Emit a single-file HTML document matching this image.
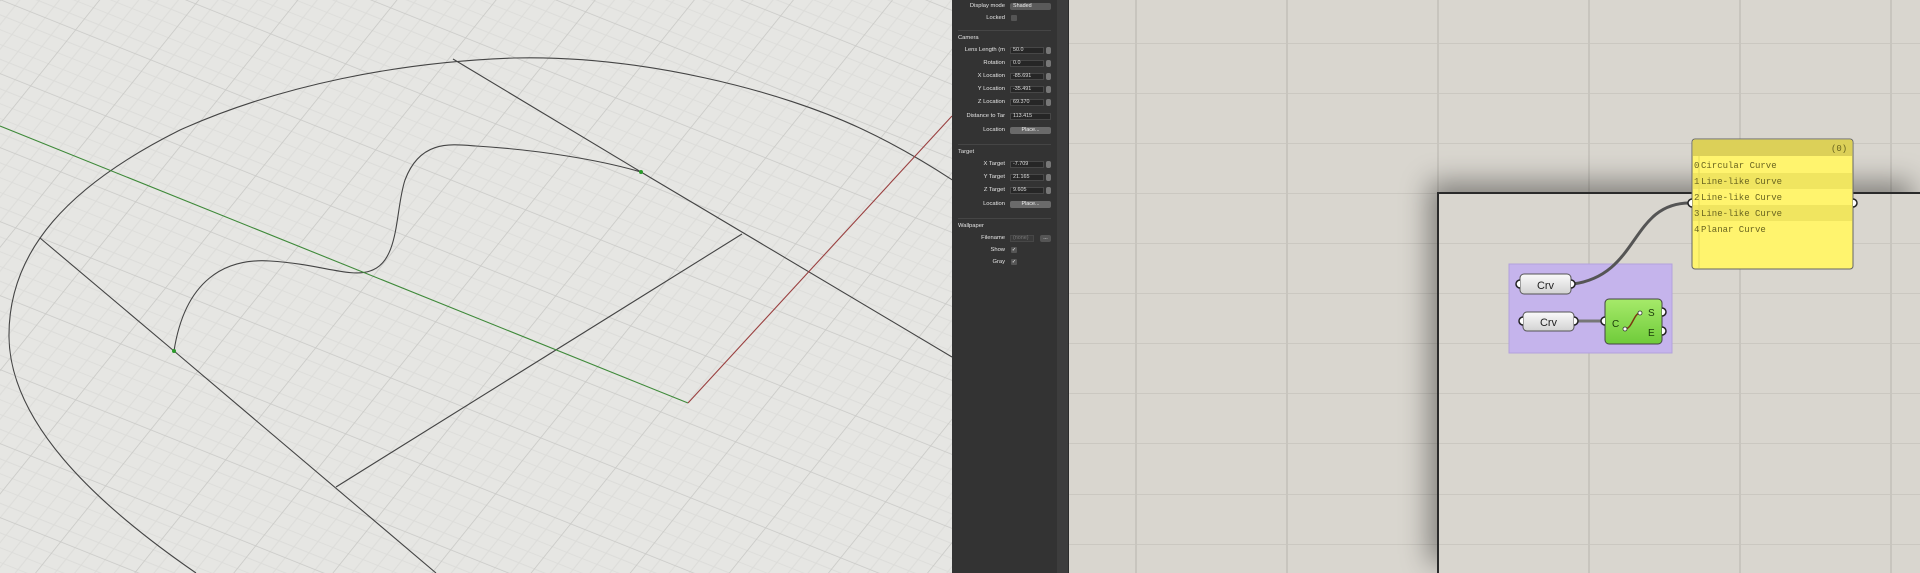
<!DOCTYPE html>
<html><head><meta charset="utf-8"><style>
*{margin:0;padding:0;box-sizing:border-box}
html,body{width:1920px;height:573px;overflow:hidden}
body{position:relative;background:#e6e6e3;font-family:"Liberation Sans",sans-serif}
#vp{position:absolute;left:0;top:0;width:952px;height:573px}
#panel{position:absolute;left:952px;top:0;width:105px;height:573px;background:#333;color:#e4e4e4;font-size:5.8px}
#strip{position:absolute;left:1057px;top:0;width:12px;height:573px;background:#3d3d3d;border-right:1px solid #2c2c2c}
#canvas{position:absolute;left:1069px;top:0;width:851px;height:573px;background:#d9d6cf;overflow:hidden}
.lab{position:absolute;right:52px;text-align:right;white-space:nowrap;line-height:7px}
.hd{position:absolute;left:6px;line-height:7px}
.fld{position:absolute;left:58px;width:34px;height:7px;background:#262626;border:1px solid #474747;line-height:5px;padding-left:2px;font-size:5.4px;color:#ddd}
.spin{position:absolute;left:94px;width:5px;height:7px;background:#777;border-radius:2px}
.btn{position:absolute;left:58px;width:41px;height:7px;background:#6a6a6a;border-radius:2px;text-align:center;line-height:7px;font-size:5.4px;color:#eee}
.sep{position:absolute;left:6px;width:93px;height:1px;background:#454545}
.cb{position:absolute;left:59px;width:6px;height:6px;background:#555;border-radius:1px;font-size:5px;line-height:6px;text-align:center;color:#fff}
.hl{position:absolute;left:0;width:851px;height:1px;background:#cbc8c1}
.vl{position:absolute;top:0;width:2px;height:573px;background:#c8c5be}
</style></head><body>
<svg id="vp" width="952" height="573" viewBox="0 0 952 573">
<defs>
<pattern id="g" width="100" height="100" patternUnits="userSpaceOnUse" patternTransform="matrix(0.75 0.30 0.45 -0.56 0 0)">
<path d="M20 0V100M40 0V100M60 0V100M80 0V100M0 20H100M0 40H100M0 60H100M0 80H100" stroke="#dcdcd9" stroke-width="1.3" fill="none"/>
<path d="M0 0V100M0 0H100" stroke="#c8c8c5" stroke-width="2" fill="none"/>
</pattern>
</defs>
<rect width="952" height="573" fill="#e6e6e3"/>
<rect width="952" height="573" fill="url(#g)"/>
<g fill="none" stroke="#444" stroke-width="1.1">
<path d="M196,573 C90,500 10,420 9,337 C8,250 70,185 180,130 C280,85 400,62 514,58 C640,55 780,90 864,130 C900,147 930,165 960,185"/>
<path d="M453,59 L641,172 L952,357"/>
<path d="M40,238 L174,351 L436,573"/>
<path d="M742,234 L336,487"/>
<path d="M174,351 C185,280 225,258 270,261 C320,264 350,278 370,271 C400,262 395,210 405,180 C420,140 450,144 476,146 C540,150 600,160 641,172"/>
</g>
<path d="M0,126 L688,403" stroke="#3f8a3a" stroke-width="1.1"/>
<path d="M688,403 L952,116" stroke="#9a4040" stroke-width="1.1"/>
<circle cx="174" cy="351" r="2" fill="#2a9a2a"/><circle cx="641" cy="172" r="2" fill="#2a9a2a"/>
</svg>
<div id="panel">
<div class="lab" style="top:3px">Display mode</div><div class="btn" style="top:3px;background:#5a5a5a;text-align:left;padding-left:3px">Shaded</div>
<div class="lab" style="top:15px">Locked</div><div class="cb" style="top:15px"></div>
<div class="sep" style="top:30px"></div>
<div class="hd" style="top:35px">Camera</div>
<div class="lab" style="top:47px">Lens Length (m</div><div class="fld" style="top:47px">50.0</div><div class="spin" style="top:47px"></div>
<div class="lab" style="top:60px">Rotation</div><div class="fld" style="top:60px">0.0</div><div class="spin" style="top:60px"></div>
<div class="lab" style="top:73px">X Location</div><div class="fld" style="top:73px">-85.691</div><div class="spin" style="top:73px"></div>
<div class="lab" style="top:86px">Y Location</div><div class="fld" style="top:86px">-35.491</div><div class="spin" style="top:86px"></div>
<div class="lab" style="top:99px">Z Location</div><div class="fld" style="top:99px">69.370</div><div class="spin" style="top:99px"></div>
<div class="lab" style="top:113px">Distance to Tar</div><div class="fld" style="top:113px;width:41px">113.415</div>
<div class="lab" style="top:127px">Location</div><div class="btn" style="top:127px">Place...</div>
<div class="sep" style="top:144px"></div>
<div class="hd" style="top:149px">Target</div>
<div class="lab" style="top:161px">X Target</div><div class="fld" style="top:161px">-7.709</div><div class="spin" style="top:161px"></div>
<div class="lab" style="top:174px">Y Target</div><div class="fld" style="top:174px">21.165</div><div class="spin" style="top:174px"></div>
<div class="lab" style="top:187px">Z Target</div><div class="fld" style="top:187px">9.605</div><div class="spin" style="top:187px"></div>
<div class="lab" style="top:201px">Location</div><div class="btn" style="top:201px">Place...</div>
<div class="sep" style="top:218px"></div>
<div class="hd" style="top:223px">Wallpaper</div>
<div class="lab" style="top:235px">Filename</div><div class="fld" style="top:235px;width:24px;background:#3a3a3a;color:#777">(none)</div><div class="btn" style="top:235px;left:88px;width:11px;background:#555">...</div>
<div class="lab" style="top:247px">Show</div><div class="cb" style="top:247px">✓</div>
<div class="lab" style="top:259px">Gray</div><div class="cb" style="top:259px">✓</div>
</div>
<div id="strip"></div>
<div id="canvas">
<div class="hl" style="top:43px"></div><div class="hl" style="top:93px"></div><div class="hl" style="top:143px"></div><div class="hl" style="top:193px"></div><div class="hl" style="top:243px"></div><div class="hl" style="top:293px"></div><div class="hl" style="top:343px"></div><div class="hl" style="top:393px"></div><div class="hl" style="top:443px"></div><div class="hl" style="top:494px"></div><div class="hl" style="top:544px"></div>
<div class="vl" style="left:66px"></div><div class="vl" style="left:217px"></div><div class="vl" style="left:368px"></div><div class="vl" style="left:519px"></div><div class="vl" style="left:670px"></div><div class="vl" style="left:821px"></div>
<div style="position:absolute;left:368px;top:192px;width:483px;height:381px;border-top:2px solid #2a2a2a;border-left:2px solid #2a2a2a;box-shadow:-8px -10px 26px rgba(0,0,0,0.4)"></div>
</div>
<svg style="position:absolute;left:0;top:0" width="1920" height="573">
<rect x="1509" y="264" width="163" height="89" fill="#c5b4ec" stroke="#b3a2dc"/>
<path d="M1573,284 C1640,275 1630,203 1690,203" stroke="#555" stroke-width="3" fill="none"/>
<path d="M1575,321 L1603,321" stroke="#777" stroke-width="3"/>
<defs><linearGradient id="w" x1="0" y1="0" x2="0" y2="1"><stop offset="0" stop-color="#fafafa"/><stop offset="1" stop-color="#d2d2d2"/></linearGradient>
<linearGradient id="gr" x1="0" y1="0" x2="0" y2="1"><stop offset="0" stop-color="#a6ea6a"/><stop offset="1" stop-color="#6fcb3a"/></linearGradient></defs>
<rect x="1520" y="274" width="51" height="20" rx="4" fill="url(#w)" stroke="#555"/>
<text x="1545.5" y="289" font-size="11" text-anchor="middle" fill="#222" font-family="Liberation Sans">Crv</text>
<path d="M1520,280 a4,4 0 0 0 0,8 M1571,280 a4,4 0 0 1 0,8" stroke="#222" stroke-width="1.5" fill="#fff"/>
<rect x="1523" y="312" width="51" height="19" rx="4" fill="url(#w)" stroke="#555"/>
<text x="1548.5" y="326" font-size="11" text-anchor="middle" fill="#222" font-family="Liberation Sans">Crv</text>
<path d="M1523,317 a4,4 0 0 0 0,8 M1574,317 a4,4 0 0 1 0,8" stroke="#222" stroke-width="1.5" fill="#fff"/>
<rect x="1605" y="299" width="57" height="45" rx="4" fill="url(#gr)" stroke="#444"/>
<text x="1612" y="327" font-size="10" fill="#1a3a0a" font-family="Liberation Sans">C</text>
<text x="1648" y="316" font-size="10" fill="#1a3a0a" font-family="Liberation Sans">S</text>
<text x="1648" y="336" font-size="10" fill="#1a3a0a" font-family="Liberation Sans">E</text>
<path d="M1625,329 C1632,329 1634,313 1640,313" stroke="#7a3a10" stroke-width="1.5" fill="none"/>
<circle cx="1625" cy="329" r="2" fill="#fff" stroke="#333" stroke-width=".8"/><circle cx="1640" cy="313" r="2" fill="#fff" stroke="#333" stroke-width=".8"/>
<path d="M1605,317 a4,4 0 0 0 0,8 M1662,308 a4,4 0 0 1 0,8 M1662,327 a4,4 0 0 1 0,8" stroke="#222" stroke-width="1.5" fill="#fff"/>
<rect x="1692" y="139" width="161" height="130" rx="3" fill="#fff46e" stroke="#666"/>
<rect x="1693" y="140" width="159" height="16" fill="#dcd058"/>
<rect x="1693" y="173" width="159" height="16" fill="#f0e560"/>
<rect x="1693" y="205" width="159" height="16" fill="#f0e560"/>
<line x1="1699" y1="156" x2="1699" y2="268" stroke="#e6dc5a"/>
<g font-family="Liberation Mono" font-size="9" fill="#6a6520">
<text x="1831" y="151">(0)</text>
<text x="1694" y="168">0</text><text x="1701" y="168">Circular Curve</text>
<text x="1694" y="184">1</text><text x="1701" y="184">Line-like Curve</text>
<text x="1694" y="200">2</text><text x="1701" y="200">Line-like Curve</text>
<text x="1694" y="216">3</text><text x="1701" y="216">Line-like Curve</text>
<text x="1694" y="232">4</text><text x="1701" y="232">Planar Curve</text>
</g>
<path d="M1692,199 a4,4 0 0 0 0,8 M1853,199 a4,4 0 0 1 0,8" stroke="#222" stroke-width="1.5" fill="#fff"/>
</svg>
</body></html>
